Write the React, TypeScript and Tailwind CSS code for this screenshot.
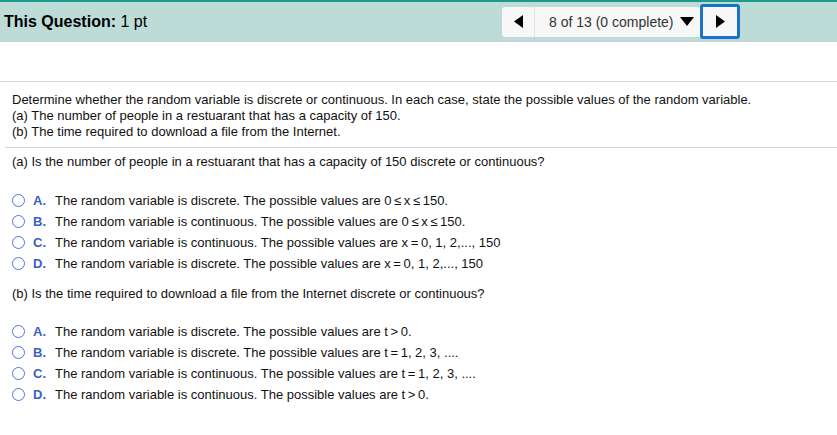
import React from "react";

type Option = { key: string; text: React.ReactNode };

const partA: Option[] = [
  { key: "A.", text: <>The random variable is discrete. The possible values are 0&thinsp;≤&thinsp;x&thinsp;≤&thinsp;150.</> },
  { key: "B.", text: <>The random variable is continuous. The possible values are 0&thinsp;≤&thinsp;x&thinsp;≤&thinsp;150.</> },
  { key: "C.", text: <>The random variable is continuous. The possible values are x&thinsp;=&thinsp;0, 1, 2,..., 150</> },
  { key: "D.", text: <>The random variable is discrete. The possible values are x&thinsp;=&thinsp;0, 1, 2,..., 150</> },
];

const partB: Option[] = [
  { key: "A.", text: <>The random variable is discrete. The possible values are t&thinsp;&gt;&thinsp;0.</> },
  { key: "B.", text: <>The random variable is discrete. The possible values are t&thinsp;=&thinsp;1, 2, 3, ....</> },
  { key: "C.", text: <>The random variable is continuous. The possible values are t&thinsp;=&thinsp;1, 2, 3, ....</> },
  { key: "D.", text: <>The random variable is continuous. The possible values are t&thinsp;&gt;&thinsp;0.</> },
];

function Choices({ items }: { items: Option[] }) {
  return (
    <div className="flex flex-col">
      {items.map((o) => (
        <div key={o.key} className="flex h-[21px] items-center">
          <span className="ml-[12px] h-[13px] w-[13px] rounded-full border-[1.5px] border-[#4f78d6] bg-white" />
          <span className="ml-[8px] w-[22px] font-bold text-[#3a62c4]">{o.key}</span>
          <span>{o.text}</span>
        </div>
      ))}
    </div>
  );
}

export default function App() {
  return (
    <div className="h-[435px] w-[837px] overflow-hidden bg-white text-[13px] leading-[16px] text-[#111]" style={{ fontFamily: '"Liberation Sans", Arial, sans-serif' }}>
      <div className="flex h-[42px] items-center justify-between border-t-2 border-b border-t-[#1d9a8a] border-b-[#cfd0dc] bg-[#bddbd7]">
        <div className="pl-[4px] text-[16px] leading-[20px] text-black">
          <span className="font-bold">This Question:</span> 1 pt
        </div>
        <div className="mr-[97px] flex items-center">
          <div className="flex h-[30px] items-center rounded-l-[3px] bg-[#f7f7f7]">
            <div className="flex h-full w-[33px] items-center justify-center border-r border-[#e2e2e2]">
              <svg width="9" height="13" viewBox="0 0 9 13"><path d="M9 0L0 6.5L9 13Z" fill="#000" /></svg>
            </div>
            <div className="flex h-full w-[165px] items-center pl-[14px] text-[14px] text-[#333]">
              8 of 13 (0 complete)
              <svg className="ml-[6px]" width="14" height="9" viewBox="0 0 14 9"><path d="M0 0H14L7 9Z" fill="#000" /></svg>
            </div>
          </div>
          <div className="flex h-[35px] w-[40px] items-center justify-center rounded-[3px] border-[3px] border-[#1a73c8] bg-[#f7f7f7]">
            <svg width="9" height="13" viewBox="0 0 9 13"><path d="M0 0L9 6.5L0 13Z" fill="#000" /></svg>
          </div>
        </div>
      </div>

      <div className="mt-[39px] border-t border-[#d4d4dc] pt-[10px]">
        <div className="pl-[12px]">
          <p>Determine whether the random variable is discrete or continuous. In each case, state the possible values of the random variable.</p>
          <p>(a) The number of people in a restuarant that has a capacity of 150.</p>
          <p>(b) The time required to download a file from the Internet.</p>
        </div>
        <div className="ml-[5px] mt-[7px] border-t border-[#d4d4dc] pt-[6px]">
          <p className="pl-[7px]">(a) Is the number of people in a restuarant that has a capacity of 150 discrete or continuous?</p>
        </div>
        <div className="mt-[20px]">
          <Choices items={partA} />
        </div>
        <p className="mt-[12px] pl-[12px]">(b) Is the time required to download a file from the Internet discrete or continuous?</p>
        <div className="mt-[19px]">
          <Choices items={partB} />
        </div>
      </div>
    </div>
  );
}
